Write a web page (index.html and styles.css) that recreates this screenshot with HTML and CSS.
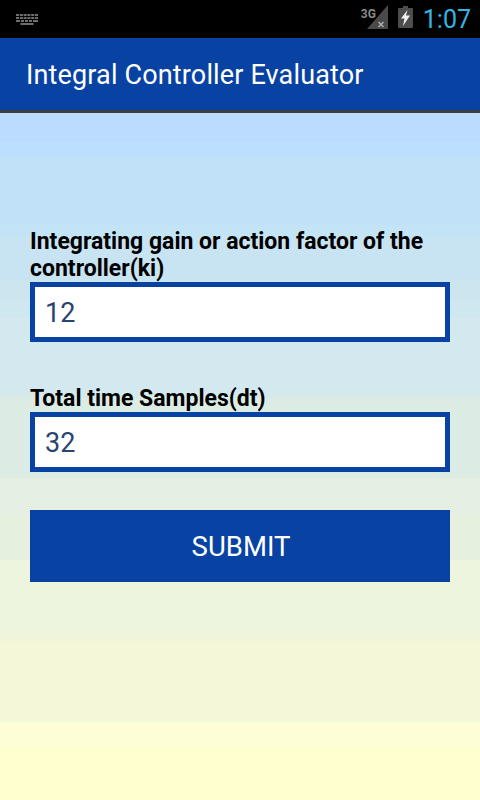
FILE: index.html
```html
<!DOCTYPE html>
<html lang="en">
<head>
    <meta charset="UTF-8">
    <meta name="viewport" content="width=device-width, initial-scale=1.0">
    <title>Integral Controller Evaluator</title>
    <link rel="stylesheet" href="styles.css">
</head>
<body>
    <!-- Status bar -->
    <div class="status-bar">
        <svg class="keyboard-icon" width="22" height="11" viewBox="0 0 22 11">
            <g fill="#6e6e6e">
                <rect x="0" y="0" width="3" height="2"/><rect x="3.800" y="0" width="3" height="2"/><rect x="7.600" y="0" width="3" height="2"/><rect x="11.400" y="0" width="3" height="2"/><rect x="15.200" y="0" width="3" height="2"/><rect x="19" y="0" width="3" height="2"/>
                <rect x="0" y="3" width="3" height="2"/><rect x="3.800" y="3" width="3" height="2"/><rect x="7.600" y="3" width="3" height="2"/><rect x="11.400" y="3" width="3" height="2"/><rect x="15.200" y="3" width="3" height="2"/><rect x="19" y="3" width="3" height="2"/>
                <rect x="0" y="6" width="4" height="2"/><rect x="5" y="6" width="3" height="2"/><rect x="9" y="6" width="3" height="2"/><rect x="13" y="6" width="3" height="2"/><rect x="17" y="6" width="5" height="2"/>
                <rect x="4.500" y="9" width="13" height="2"/>
            </g>
        </svg>
        <div class="status-right">
            <div class="signal">
                <span class="signal-label">3G</span>
                <svg class="signal-icon" width="21" height="24" viewBox="0 0 21 24">
                    <path d="M21 0V24H0Z" fill="#4a4a4a"/>
                    <path d="M11.500 17l5 5m0-5l-5 5" stroke="#b5b5b5" stroke-width="1.300" fill="none"/>
                </svg>
            </div>
            <svg class="battery-icon" width="15" height="22" viewBox="0 0 15 22">
                <path d="M5 0h5v2h4a1 1 0 0 1 1 1v18a1 1 0 0 1-1 1H1a1 1 0 0 1-1-1V3a1 1 0 0 1 1-1h4Z" fill="#4d4d4d"/>
                <path d="M9.500 4L3 12.500H6.500L5 20L12 9.500H8Z" fill="#f2f2f2"/>
            </svg>
            <span class="clock">1:07</span>
        </div>
    </div>

    <!-- App bar -->
    <header class="app-bar">Integral Controller Evaluator</header>

    <!-- Form -->
    <main class="content">
        <div class="form-group">
            <label for="ki">Integrating gain or action factor of the controller(ki)</label>
            <input type="text" id="ki" value="12">
        </div>
        <div class="form-group">
            <label for="dt">Total time Samples(dt)</label>
            <input type="text" id="dt" value="32">
        </div>
        <button class="submit-button">SUBMIT</button>
    </main>
</body>
</html>
```

FILE: styles.css
```css
* {
  margin: 0;
  padding: 0;
  box-sizing: border-box;
}

body {
  width: 480px;
  height: 800px;
  overflow: hidden;
  font-family: Roboto, sans-serif;
  display: flex;
  flex-direction: column;
}

.status-bar {
  height: 38px;
  background-color: #000;
  display: flex;
  align-items: center;
  justify-content: space-between;
  padding: 0 9px 0 16px;
}

.keyboard-icon {
  margin-top: 1px;
}

.status-right {
  display: flex;
  align-items: center;
}

.signal {
  position: relative;
  width: 27px;
  height: 24px;
  margin-right: 10px;
  margin-bottom: 4px;
}

.signal-label {
  position: absolute;
  left: 0;
  top: 3px;
  font-size: 12px;
  font-weight: bold;
  line-height: 12px;
  color: #8a8a8a;
}

.signal-icon {
  position: absolute;
  right: 0;
  top: 0;
}

.battery-icon {
  margin-bottom: 4px;
}

.clock {
  margin-left: 10px;
  font-size: 25px;
  line-height: 30px;
  margin-top: 2px;
  color: #33b5e5;
}

.app-bar {
  height: 75px;
  flex-shrink: 0;
  padding: 2px 0 0 26px;
  display: flex;
  align-items: center;
  background-color: #0843a3;
  border-bottom: 3px solid #3b3f44;
  color: #fff;
  font-size: 27px;
  letter-spacing: 0.15px;
}

/* the background shows colour bands, so the stops are hard */
.content {
  flex: 1;
  padding: 115px 30px 0;
  background: linear-gradient(to bottom,
    #bbdcff 0 29px,
    #bbe0ff 29px 42px,
    #c1e1f8 42px 112px,
    #c2e4f5 112px 124px,
    #c8e3f2 124px 167px,
    #cde5ef 167px 187px,
    #cfe8f0 187px 205px,
    #d3e8ef 205px 280px,
    #d6ebe9 280px 285px,
    #dcece5 285px 365px,
    #e5efe4 365px 401px,
    #e5f0df 401px 447px,
    #edf5df 447px 517px,
    #eff5da 517px 527px,
    #f4f6d9 527px 531px,
    #f4f8d8 531px 609px,
    #fefed6 609px 635px,
    #ffffcf 635px);
}

.form-group {
  margin-bottom: 38px;
}

.form-group:first-child {
  margin-bottom: 0;
}

.form-group + .form-group {
  margin-top: 43px;
}

.form-group label {
  display: block;
  font-size: 23px;
  font-weight: bold;
  line-height: 27px;
  color: #000;
}

.form-group input {
  display: block;
  width: 100%;
  height: 60px;
  padding: 2px 10px 0;
  border: 5px solid #0843a3;
  border-radius: 0;
  background-color: #fff;
  color: #2a4470;
  font-family: Roboto, sans-serif;
  font-size: 27px;
  outline: none;
}

.submit-button {
  display: block;
  width: 100%;
  height: 72px;
  padding-left: 2px;
  border: none;
  background-color: #0843a3;
  color: #fff;
  font-family: Roboto, sans-serif;
  font-size: 27.500px;
}
```
